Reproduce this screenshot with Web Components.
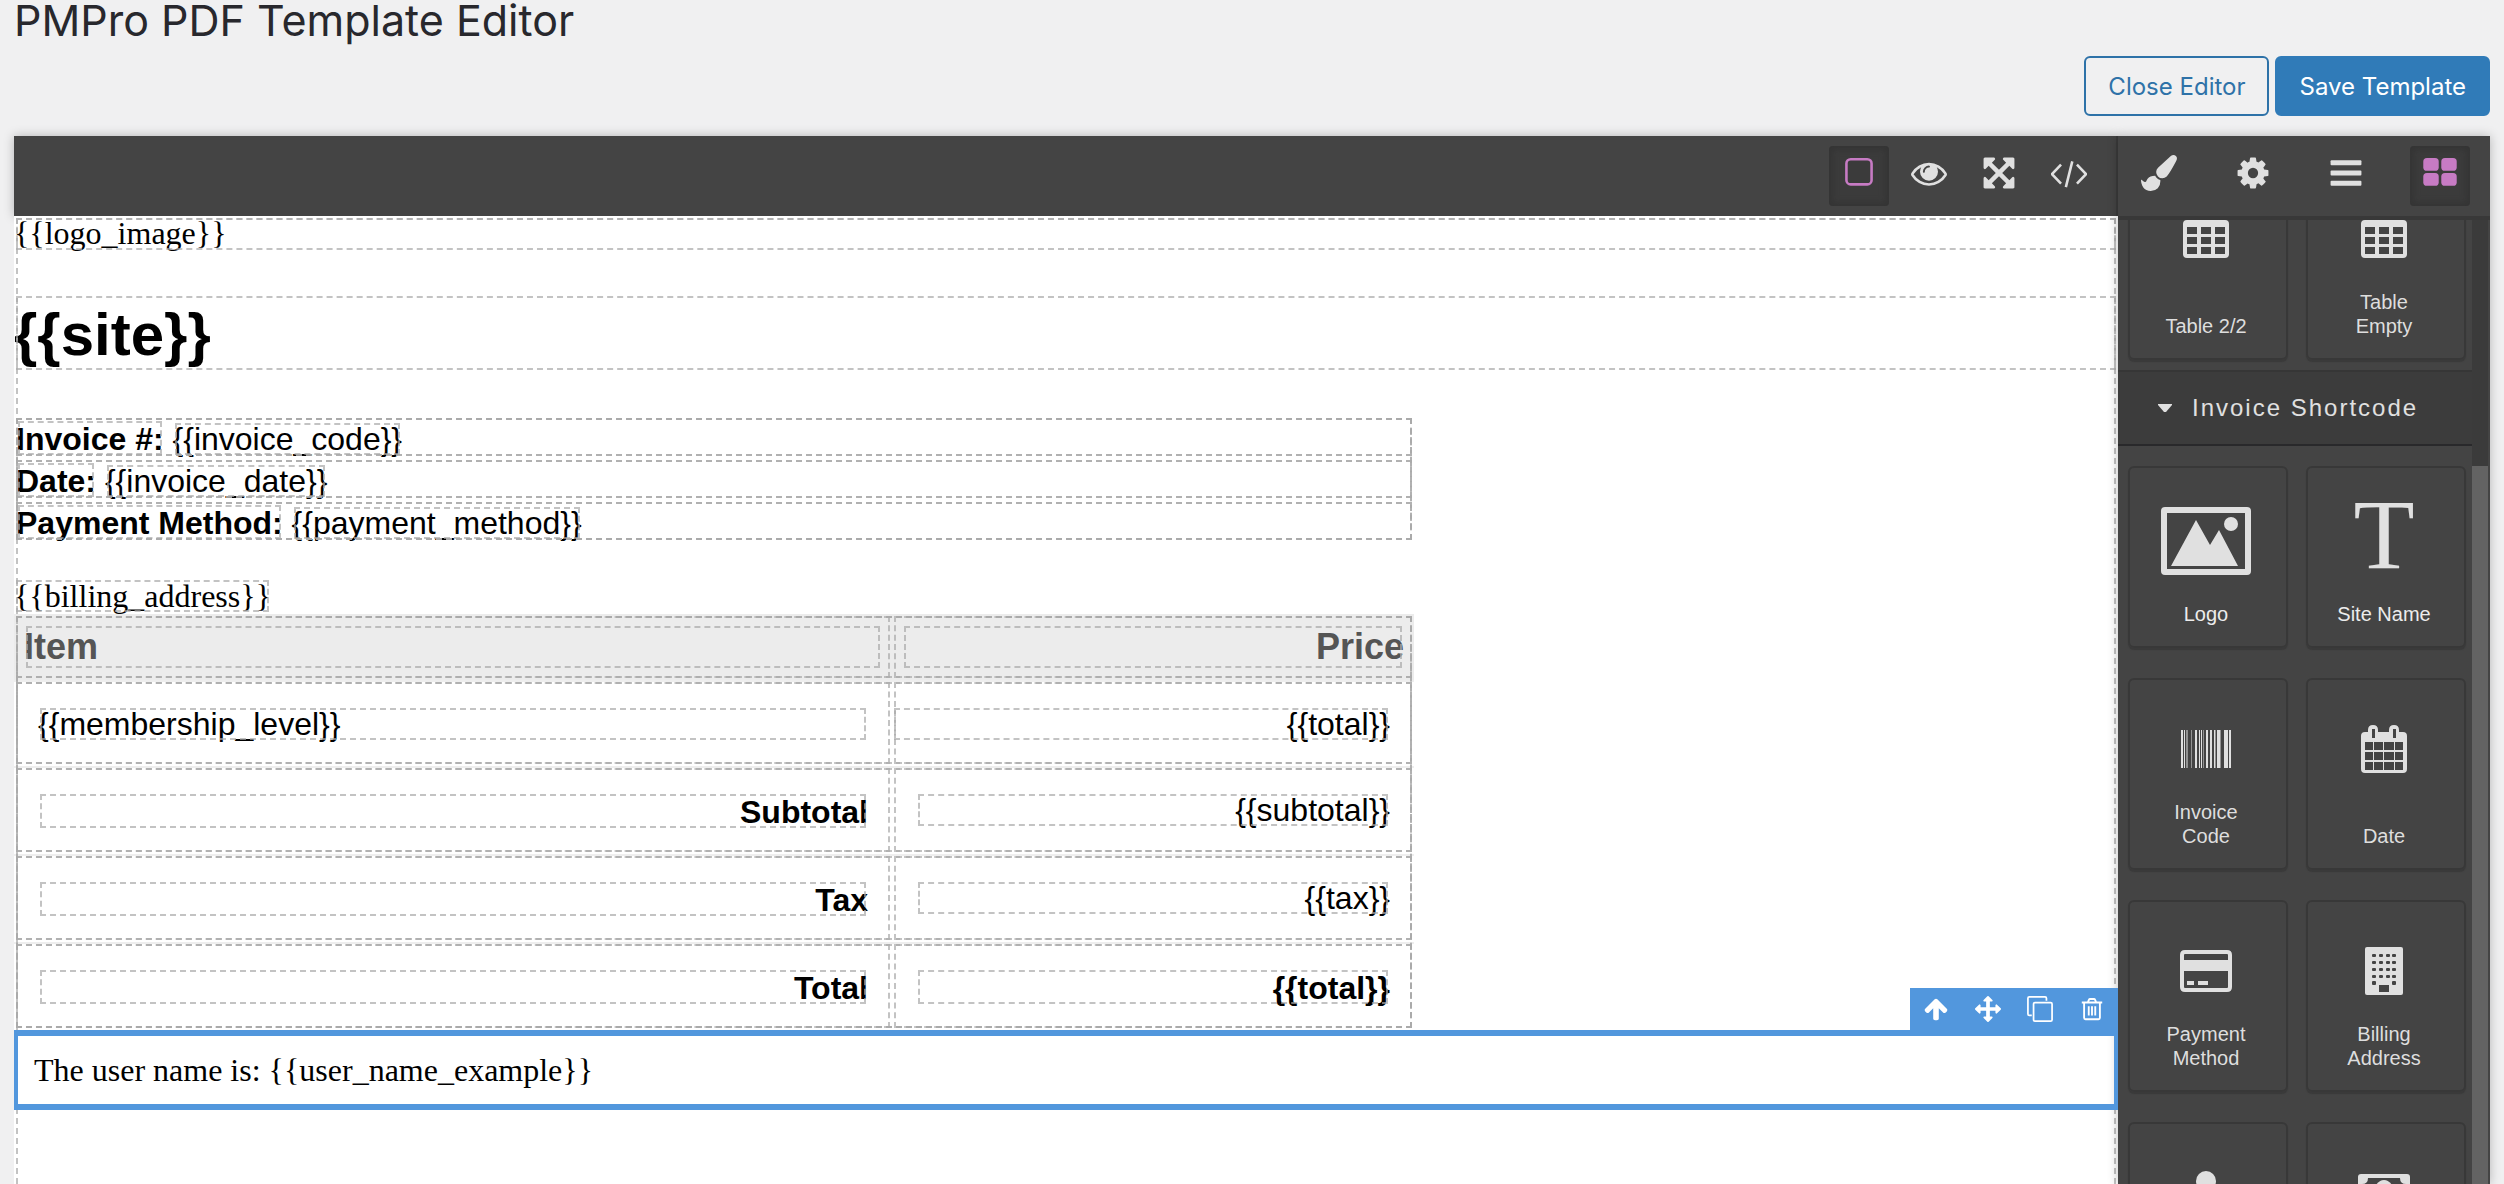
<!DOCTYPE html>
<html lang="en">
<head>
<meta charset="utf-8">
<title>PMPro PDF Template Editor</title>
<style>
    html, body {
        height: 100%;
    }
    body {
        margin: 0;
        overflow: hidden;
        background: #f0f0f1;
        font-family: Inter, "Liberation Sans", sans-serif;
    }
</style>
</head>
<body>

<template-editor>
    <span slot="title">PMPro PDF Template Editor</span>
    <invoice-document></invoice-document>
    <blocks-panel slot="panel"></blocks-panel>
</template-editor>

<script>
const ICONS = {
    square: '<rect x="270" y="210" width="1252" height="1252" rx="210" fill="none" stroke="currentColor" stroke-width="128"/>',
    eye: '<path d="M1664 960q-152-236-381-353 61 104 61 225 0 185-131.5 316.5t-316.5 131.5-316.5-131.5-131.5-316.5q0-121 61-225-229 117-381 353 133 205 333.5 326.5t434.5 121.5 434.5-121.5 333.5-326.5zm-720-384q0-20-14-34t-34-14q-125 0-214.5 89.5t-89.5 214.5q0 20 14 34t34 14 34-14 14-34q0-86 61-147t147-61q20 0 34-14t14-34zm848 384q0 34-20 69-140 230-376.5 368.5t-499.5 138.5-499.5-139-376.5-368q-20-35-20-69t20-69q140-229 376.5-368t499.5-139 499.5 139 376.5 368q20 35 20 69z"/>',
    expand: '<path d="M1411 541l-355 355 355 355 144-144q29-31 70-14 39 17 39 59v448q0 26-19 45t-45 19h-448q-42 0-59-40-17-39 14-69l144-144-355-355-355 355 144 144q31 30 14 69-17 40-59 40h-448q-26 0-45-19t-19-45v-448q0-42 40-59 39-17 69 14l144 144 355-355-355-355-144 144q-19 19-45 19-12 0-24-5-40-17-40-59v-448q0-26 19-45t45-19h448q42 0 59 40 17 39-14 69l-144 144 355 355 355-355-144-144q-31-30-14-69 17-40 59-40h448q26 0 45 19t19 45v448q0 42-39 59-13 5-25 5-26 0-45-19z"/>',
    code: '<path d="M500 480L50 950l450 470M1292 480l450 470-450 470M1060 320L740 1600" fill="none" stroke="currentColor" stroke-width="128"/>',
    brush: '<path d="M1615 0q70 0 122.5 46.5t52.5 116.5q0 63-45 151-332 629-465 752-97 91-218 91-126 0-216.5-92.5t-90.5-219.5q0-128 92-212l638-579q59-54 130-54zm-909 1034q39 76 106.5 130t150.5 76l1 71q4 213-129.5 347t-348.5 134q-123 0-218-46.5t-152.5-127.5-86.5-183-29-220q7 5 41 30t62 44.5 59 36.5 46 17q41 0 55-37 25-66 57.5-112.5t69.5-76 88-47.5 103-25.5 125-10.5z"/>',
    cog: '<path d="M1152 896q0-106-75-181t-181-75-181 75-75 181 75 181 181 75 181-75 75-181zm512-109v222q0 12-8 23t-20 13l-185 28q-19 54-39 91 35 50 107 138 10 12 10 25t-9 23q-27 37-99 108t-94 71q-12 0-26-9l-138-108q-44 23-91 38-16 136-29 186-7 28-36 28h-222q-14 0-24.5-8.5t-11.5-21.5l-28-184q-49-16-90-37l-141 107q-10 9-25 9-14 0-25-11-126-114-165-168-7-10-7-23 0-12 8-23 15-21 51-66.5t54-70.5q-27-50-41-99l-183-27q-13-2-21-12.5t-8-23.5v-222q0-12 8-23t19-13l186-28q14-46 39-92-40-57-107-138-10-12-10-24 0-10 9-23 26-36 98.5-107.5t94.5-71.5q13 0 26 10l138 107q44-23 91-38 16-136 29-186 7-28 36-28h222q14 0 24.5 8.5t11.5 21.5l28 184q49 16 90 37l142-107q9-9 24-9 13 0 25 10 129 119 165 170 7 8 7 22 0 12-8 23-15 21-51 66.5t-54 70.5q26 50 41 98l183 28q13 2 21 12.5t8 23.5z"/>',
    bars: '<rect x="128" y="256" width="1536" height="256" rx="50"/><rect x="128" y="768" width="1536" height="256" rx="50"/><rect x="128" y="1280" width="1536" height="256" rx="50"/>',
    large: '<rect x="64" y="150" width="768" height="640" rx="180"/><rect x="960" y="150" width="768" height="640" rx="180"/><rect x="64" y="896" width="768" height="640" rx="180"/><rect x="960" y="896" width="768" height="640" rx="180"/>',
    up: '<path d="M1675 971q0 51-37 90l-75 75q-38 38-91 38-54 0-90-38l-294-293v704q0 52-37.5 84.5t-90.5 32.5h-128q-53 0-90.5-32.5t-37.5-84.5v-704l-294 293q-36 38-90 38t-90-38l-75-75q-38-38-38-90 0-53 38-91l651-651q35-37 90-37 54 0 91 37l651 651q37 39 37 91z"/>',
    move: '<path d="M1792 896q0 26-19 45l-256 256q-19 19-45 19t-45-19-19-45v-128h-384v384h128q26 0 45 19t19 45-19 45l-256 256q-19 19-45 19t-45-19l-256-256q-19-19-19-45t19-45 45-19h128v-384h-384v128q0 26-19 45t-45 19-45-19l-256-256q-19-19-19-45t19-45l256-256q19-19 45-19t45 19 19 45v128h384v-384h-128q-26 0-45-19t-19-45 19-45l256-256q19-19 45-19t45 19l256 256q19 19 19 45t-19 45-45 19h-128v384h384v-128q0-26 19-45t45-19 45 19l256 256q19 19 19 45z"/>',
    clone: '<g fill="none" stroke="currentColor" stroke-width="120"><rect x="452" y="452" width="1276" height="1276" rx="96"/><path d="M1340 330V160q0-96-96-96H160q-96 0-96 96v1084q0 96 96 96h170"/></g>',
    trash: '<g fill="none" stroke="currentColor" stroke-width="128"><path d="M192 448h1408M352 448v1050q0 102 96 102h896q96 0 96-102V448M610 430l70-170q24-52 80-52h272q56 0 80 52l70 170M672 700v640M896 700v640M1120 700v640"/></g>'
};

// small drawings used on the block cards, in their own pixel boxes
const ART = {
    table: [46, 38, '<path fill-rule="evenodd" d="M4 0h38q4 0 4 4v30q0 4-4 4H4q-4 0-4-4V4q0-4 4-4zM4 7v7h10V7zM18 7v7h10V7zM32 7v7h10V7zM4 17v7h10v-7zM18 17v7h10v-7zM32 17v7h10v-7zM4 27v7h10v-7zM18 27v7h10v-7zM32 27v7h10v-7z"/>'],
    image: [90, 68, '<path fill-rule="evenodd" d="M4 0h82q4 0 4 4v60q0 4-4 4H4q-4 0-4-4V4q0-4 4-4zM6 6v56h78V6z"/><path d="M10 59L35 13l14 25 9-15 19 36z"/><circle cx="70" cy="17" r="7"/>'],
    barcode: [50, 38, '<path d="M0 0h2v38H0zM3 0h1v38H3zM14 0h2v38h-2zM18 0h1v38h-1zM20 0h1v38h-1zM25 0h2v38h-2zM29 0h2v38h-2zM33 0h1v38h-1zM36 0h3v38h-3zM43 0h3v38h-3zM46 0h1v38h-1zM48 0h2v38h-2z"/><path opacity=".5" d="M5 0h2v38H5zM10 0h1v38h-1zM22 0h1v38h-1zM34 0h1v38h-1zM39 0h1v38h-1z"/>'],
    calendar: [46, 48, '<path fill-rule="evenodd" d="M4 7h3V5q0-5 5-5t5 5v2h11V5q0-5 5-5t5 5v2h4q4 0 4 4v33q0 4-4 4H4q-4 0-4-4V11q0-4 4-4zM11 4v9h3V4zM32 4v9h3V4zM4 17v8h8v-8zM13 17v8h9v-8zM23 17v8h10v-8zM34 17v8h8v-8zM4 27v8h8v-8zM13 27v8h9v-8zM23 27v8h10v-8zM34 27v8h8v-8zM4 37v8h8v-8zM13 37v8h9v-8zM23 37v8h10v-8zM34 37v8h8v-8z"/>'],
    card: [52, 42, '<path fill-rule="evenodd" d="M5 0h42q5 0 5 5v32q0 5-5 5H5q-5 0-5-5V5q0-5 5-5zM5 4q-1 0-1 1v5h44V5q0-1-1-1zM4 21v16q0 1 1 1h42q1 0 1-1V21z"/><path d="M7 31h7v4H7zM18 31h10v4H18z"/>'],
    building: [38, 48, '<rect width="38" height="48" rx="2"/><g fill="#444"><path d="M14 38h10v7H14z"/>' +
        [7, 14, 21, 27].map(x => [7, 14, 21, 28].map(y => `<rect x="${x}" y="${y}" width="4" height="3" rx="1"/>`).join('')).join('') +
        '<rect x="7" y="34" width="4" height="4" rx="1"/><rect x="27" y="34" width="4" height="4" rx="1"/></g>'],
    user: [44, 44, '<circle cx="22" cy="10" r="10"/><path d="M0 38q0-18 12-18 4 4 10 4t10-4q12 0 12 18 0 6-7 6H7q-7 0-7-6z"/>'],
    money: [52, 38, '<path fill-rule="evenodd" d="M3 0h46q3 0 3 3v32q0 3-3 3H3q-3 0-3-3V3q0-3 3-3zM10 4q0 6-6 6v18q6 0 6 6h32q0-6 6-6V10q-6 0-6-6z"/><ellipse cx="26" cy="19" rx="10" ry="13"/>'],
    letter: [62, 78, '<text x="31" y="66" text-anchor="middle" font-family="Liberation Serif, serif" font-size="100">T</text>']
};

class EditorElement extends HTMLElement {
    constructor() {
        super();
        const template = document.createElement('template')
        template.innerHTML = this.render()
        this.attachShadow({mode: 'open'})
        this.shadowRoot.appendChild(template.content.cloneNode(true))
    }
}

class ToolButton extends EditorElement {
    render() {
        const name = this.getAttribute('icon')
        return `
            <style>
            :host {
                display: block;
                color: #e0e0e0;
            }
            button {
                display: flex;
                justify-content: center;
                box-sizing: border-box;
                width: 60px;
                height: 60px;
                padding: 9px 0 0;
                border: 0;
                border-radius: 4px;
                background: none;
                color: inherit;
                cursor: pointer;
            }
            svg {
                width: 36px;
                height: 36px;
                fill: currentColor;
            }
            :host([active]) {
                color: #c77bc4;
            }
            :host([active]) button {
                background: #3b3b3b;
                box-shadow: inset 0 0 6px 3px #343434;
            }
            :host([small]) button {
                width: 52px;
                height: 42px;
                padding: 8px 0 0;
            }
            :host([small]) {
                color: #fff;
            }
            :host([small]) svg {
                width: 26px;
                height: 26px;
            }
            </style>
            <button type="button" aria-label="${this.getAttribute('label')}">
                <svg viewBox="0 0 1792 1792">${ICONS[name]}</svg>
            </button>
        `
    }
}
customElements.define('tool-button', ToolButton);

class BlockCard extends EditorElement {
    render() {
        const [w, h, shape] = ART[this.getAttribute('art')]
        return `
            <style>
            :host {
                display: flex;
                flex-direction: column;
                box-sizing: border-box;
                height: 192px;
                padding: 36px 32px 20px 28px;
                border: 2px solid #383838;
                border-radius: 6px;
                box-shadow: 0 2px 1px #3a3a3a;
                color: #dedede;
                cursor: pointer;
            }
            :host([large]) {
                height: 182px;
                padding: 28px 12px 20px 8px;
                color: #ececec;
            }
            .art {
                display: flex;
                align-items: center;
                justify-content: center;
                height: 66px;
            }
            :host([large]) .art {
                height: 90px;
            }
            svg {
                flex: none;
                overflow: visible;
                fill: #e0e0e0;
            }
            .label {
                margin-top: auto;
                font: 20px/24px "Liberation Sans", sans-serif;
                text-align: center;
            }
            </style>
            <div class="art"><svg width="${w}" height="${h}" viewBox="0 0 ${w} ${h}">${shape}</svg></div>
            <div class="label"><slot></slot></div>
        `
    }
}
customElements.define('block-card', BlockCard);

class BlockCategory extends EditorElement {
    render() {
        const label = this.getAttribute('label')
        const heading = label ? `
            <button type="button" aria-expanded="true">
                <svg width="14" height="8" viewBox="0 0 14 8"><path d="M0 0h14v1L8 8H6L0 1z"/></svg>
                ${label}
            </button>` : ''
        return `
            <style>
            :host {
                display: block;
            }
            button {
                display: flex;
                align-items: center;
                gap: 20px;
                box-sizing: border-box;
                width: 100%;
                height: 76px;
                padding: 0 40px;
                border: 0;
                border-top: 2px solid #363636;
                border-bottom: 2px solid #29292b;
                background: #3c3c3c;
                color: #e0e0e0;
                font: 24px "Liberation Sans", sans-serif;
                letter-spacing: 2px;
                white-space: nowrap;
            }
            svg {
                flex: none;
                fill: #e0e0e0;
            }
            .grid {
                display: grid;
                grid-template-columns: 1fr 1fr;
                gap: 30px 18px;
                padding: 20px 6px 10px 10px;
            }
            </style>
            ${heading}
            <div class="grid"><slot></slot></div>
        `
    }
}
customElements.define('block-category', BlockCategory);

class BlocksPanel extends EditorElement {
    render() {
        return `
            <style>
            :host {
                display: flex;
                flex-direction: column;
                min-height: 0;
                background: #444;
                box-shadow: 0 0 10px rgba(0, 0, 0, .25);
            }
            nav {
                display: flex;
                justify-content: space-between;
                padding: 10px 20px 10px 11px;
                border-bottom: 4px solid #383838;
            }
            .body {
                display: flex;
                flex: 1;
                min-height: 0;
            }
            .list {
                flex: 1;
                overflow: hidden;
            }
            .track {
                width: 16px;
                margin-right: 2px;
                padding-top: 246px;
                box-sizing: border-box;
                background: #3b3b3b;
            }
            .thumb {
                height: 100%;
                background: #636363;
            }
            </style>
            <nav>
                <tool-button icon="brush" label="Styles"></tool-button>
                <tool-button icon="cog" label="Settings"></tool-button>
                <tool-button icon="bars" label="Layers"></tool-button>
                <tool-button icon="large" label="Blocks" active></tool-button>
            </nav>
            <div class="body">
                <div class="list">
                    <block-category>
                        <block-card art="table">Table 2/2</block-card>
                        <block-card art="table">Table Empty</block-card>
                    </block-category>
                    <block-category label="Invoice Shortcode">
                        <block-card art="image" large>Logo</block-card>
                        <block-card art="letter" large>Site Name</block-card>
                        <block-card art="barcode">Invoice Code</block-card>
                        <block-card art="calendar">Date</block-card>
                        <block-card art="card">Payment Method</block-card>
                        <block-card art="building">Billing Address</block-card>
                        <block-card art="user"></block-card>
                        <block-card art="money"></block-card>
                    </block-category>
                </div>
                <div class="track"><div class="thumb"></div></div>
            </div>
        `
    }

    connectedCallback() {
        this.shadowRoot.querySelector('.list').scrollTop = 72
    }
}

class InvoiceDocument extends EditorElement {
    render() {
        return `
            <style>
            :host {
                display: block;
                min-height: 1200px;
                color: #000;
                font: 32px/36px "Liberation Serif", serif;
            }
            :host, :host *:not(br):not(style):not(.selected):not(.actions):not(tool-button) {
                outline: 2px dashed rgba(170, 170, 170, .7);
                outline-offset: -4px;
            }
            .logo {
                padding-bottom: 2px;
                line-height: 34px;
            }
            h1 {
                margin: 42px 0 44px;
                padding-top: 4px;
                font: bold 60px/74px "Liberation Sans", sans-serif;
            }
            table {
                width: 1400px;
                max-width: 100%;
                border-spacing: 0;
                font: 32px/36px "Liberation Sans", sans-serif;
            }
            .details td {
                padding: 4px 2px 0;
                line-height: 38px;
            }
            .details strong {
                padding-top: 2px;
            }
            .items {
                table-layout: fixed;
            }
            .items th {
                padding: 10px;
                background: #ececec;
                color: #555;
                font-size: 36px;
                line-height: 46px;
                text-align: left;
            }
            .items th:first-child {
                width: 858px;
            }
            .items th:last-child, .items td:last-child {
                text-align: right;
            }
            .items td {
                padding: 24px;
                border-top: 2px solid #eee;
                vertical-align: top;
            }
            .items .level td:last-child {
                padding-left: 0;
            }
            .items .strong {
                padding-top: 2px;
                font-weight: bold;
                text-align: right;
            }
            .selected {
                position: relative;
                padding: 14px 16px;
                border: solid #5297dd;
                border-width: 6px 4px;
                line-height: 40px;
            }
            .actions {
                position: absolute;
                right: -4px;
                bottom: calc(100% + 6px);
                display: flex;
                background: #5297dd;
            }
            </style>
            <div class="logo">{{logo_image}}</div>
            <h1>{{site}}</h1>
            <table class="details">
                <tr><td><strong>Invoice #:</strong> <span>{{invoice_code}}</span></td></tr>
                <tr><td><strong>Date:</strong> <span>{{invoice_date}}</span></td></tr>
                <tr><td><strong>Payment Method:</strong> <span>{{payment_method}}</span></td></tr>
            </table>
            <br>
            <span>{{billing_address}}</span>
            <table class="items">
                <tr><th><div>Item</div></th><th><div>Price</div></th></tr>
                <tr class="level"><td><div>{{membership_level}}</div></td><td><div>{{total}}</div></td></tr>
                <tr><td><div class="strong">Subtotal</div></td><td><div>{{subtotal}}</div></td></tr>
                <tr><td><div class="strong">Tax</div></td><td><div>{{tax}}</div></td></tr>
                <tr><td><div class="strong">Total</div></td><td><div class="strong">{{total}}</div></td></tr>
            </table>
            <div class="selected">
                The user name is: {{user_name_example}}
                <div class="actions">
                    <tool-button icon="up" label="Select parent" small></tool-button>
                    <tool-button icon="move" label="Move" small></tool-button>
                    <tool-button icon="clone" label="Clone" small></tool-button>
                    <tool-button icon="trash" label="Delete" small></tool-button>
                </div>
            </div>
        `
    }
}

class TemplateEditor extends EditorElement {
    render() {
        return `
            <style>
            :host {
                display: flex;
                flex-direction: column;
                box-sizing: border-box;
                height: 100vh;
                padding: 0 14px;
            }
            h1 {
                margin: 0;
                padding-bottom: 16px;
                color: #28282d;
                font-size: 43px;
                font-weight: 400;
                line-height: 40px;
            }
            .buttons {
                display: flex;
                justify-content: flex-end;
                gap: 6px;
                margin-bottom: 20px;
            }
            .buttons button {
                height: 60px;
                padding: 0 22px;
                border: 2px solid #2e72a8;
                border-radius: 6px;
                background: none;
                color: #2e72a8;
                font: 24px Inter, sans-serif;
            }
            .buttons .primary {
                border-color: #307bb8;
                background: #307bb8;
                color: #fff;
            }
            .editor {
                display: flex;
                flex: 1;
                min-height: 0;
            }
            .main {
                display: flex;
                flex: 1;
                flex-direction: column;
                min-width: 0;
            }
            .toolbar {
                display: flex;
                justify-content: flex-end;
                gap: 10px;
                padding: 10px 17px 10px 0;
                border-right: 2px solid #3b3b3b;
                background: #444;
                box-shadow: 0 0 10px rgba(0, 0, 0, .25);
            }
            .canvas {
                flex: 1;
                min-height: 0;
                overflow: hidden;
                background: #fff;
            }
            ::slotted(blocks-panel) {
                width: 15%;
                min-width: 372px;
            }
            </style>
            <h1><slot name="title"></slot></h1>
            <div class="buttons">
                <button type="button">Close Editor</button>
                <button type="button" class="primary">Save Template</button>
            </div>
            <div class="editor">
                <div class="main">
                    <div class="toolbar">
                        <tool-button icon="square" label="View components" active></tool-button>
                        <tool-button icon="eye" label="Preview"></tool-button>
                        <tool-button icon="expand" label="Fullscreen"></tool-button>
                        <tool-button icon="code" label="View code"></tool-button>
                    </div>
                    <div class="canvas"><slot></slot></div>
                </div>
                <slot name="panel"></slot>
            </div>
        `
    }
}

customElements.define('template-editor', TemplateEditor);
customElements.define('invoice-document', InvoiceDocument);
customElements.define('blocks-panel', BlocksPanel);
</script>
</body>
</html>
